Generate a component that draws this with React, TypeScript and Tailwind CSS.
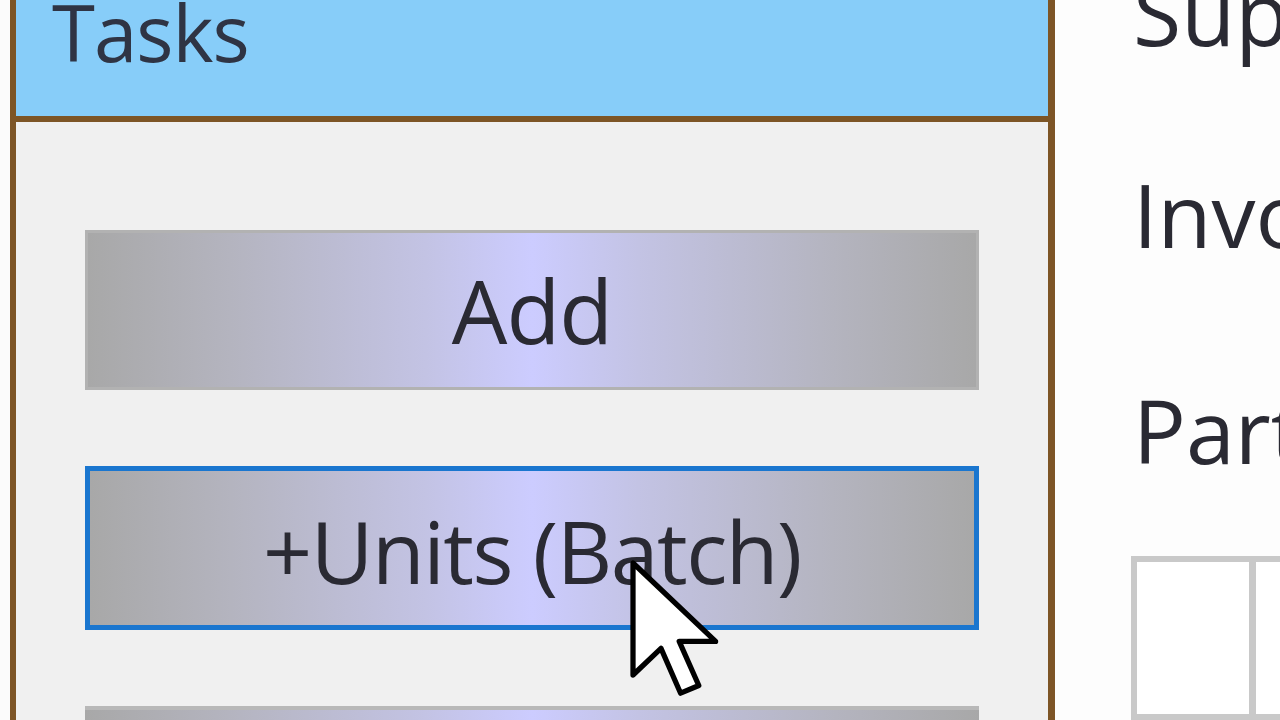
import React from 'react';

const btnFace =
  'bg-[linear-gradient(to_right,#a8a8a8_0%,#b4b4bf_16%,#c3c3e4_38%,#ccccff_50%,#c3c3e4_62%,#b4b4bf_84%,#a8a8a8_100%)]';

const Cursor: React.FC = () => (
  <svg
    className="absolute left-[626px] top-[556px]"
    width={98}
    height={147}
    viewBox="0 0 14 21"
  >
    <path
      d="M1 1 L1 17 L5 13.2 L7.8 19.6 L10.4 18.5 L7.6 12.2 L12.8 12.2 Z"
      fill="#ffffff"
      stroke="#000000"
      strokeWidth={0.75}
      strokeLinejoin="round"
    />
  </svg>
);

const App: React.FC = () => {
  return (
    <div className="relative w-[1280px] h-[720px] overflow-hidden bg-white flex font-['Open_Sans','Noto_Sans',sans-serif] text-[#2a2a33]">
      {/* left gutter */}
      <div className="w-[10px] flex-shrink-0 bg-[#fbfbfb]" />

      {/* Tasks panel */}
      <div className="w-[1045px] flex-shrink-0 flex flex-col border-l-[6px] border-r-[7px] border-[#7d5526]">
        <div className="h-[122px] flex-shrink-0 bg-[#87cdf9] border-b-[6px] border-[#7d5526] pl-[36px]">
          <div className="text-[78px] leading-none mt-[-7px] tracking-[-1px] text-[#2f3444]">Tasks</div>
        </div>
        <div className="flex-1 bg-[#f0f0f0] flex flex-col gap-[76px] px-[69px] pt-[108px]">
          <button
            className={`h-[160px] flex-shrink-0 flex items-center justify-center border-[3px] border-[#b2b2b2] ${btnFace}`}
          >
            <span className="text-[88px] leading-none tracking-[-1px]">Add</span>
          </button>
          <button
            className={`h-[164px] flex-shrink-0 flex items-center justify-center border-[5px] border-[#1a76cf] ${btnFace}`}
          >
            <span className="text-[86px] leading-none tracking-[-1.5px] pt-[6px]">+Units (Batch)</span>
          </button>
          <button
            className={`h-[160px] flex-shrink-0 border-t-[4px] border-[#b8b8b8] ${btnFace}`}
          />
        </div>
      </div>

      {/* right side of the form */}
      <div className="flex-1 bg-[#fdfdfd] flex flex-col pl-[78px] text-[88px] leading-none">
        <div className="mt-[-32px] whitespace-nowrap">Supplier</div>
        <div className="mt-[114px] whitespace-nowrap">Invoice</div>
        <div className="mt-[128px] whitespace-nowrap">Part</div>
        <div className="mt-[82px] ml-[-2px] flex h-[260px] border-[6px] border-[#c9c9c9] bg-white">
          <div className="w-[119px] flex-shrink-0 border-r-[7px] border-[#c9c9c9]" />
          <div className="w-[119px] flex-shrink-0 border-r-[7px] border-[#c9c9c9]" />
        </div>
      </div>

      <Cursor />
    </div>
  );
};

export default App;
